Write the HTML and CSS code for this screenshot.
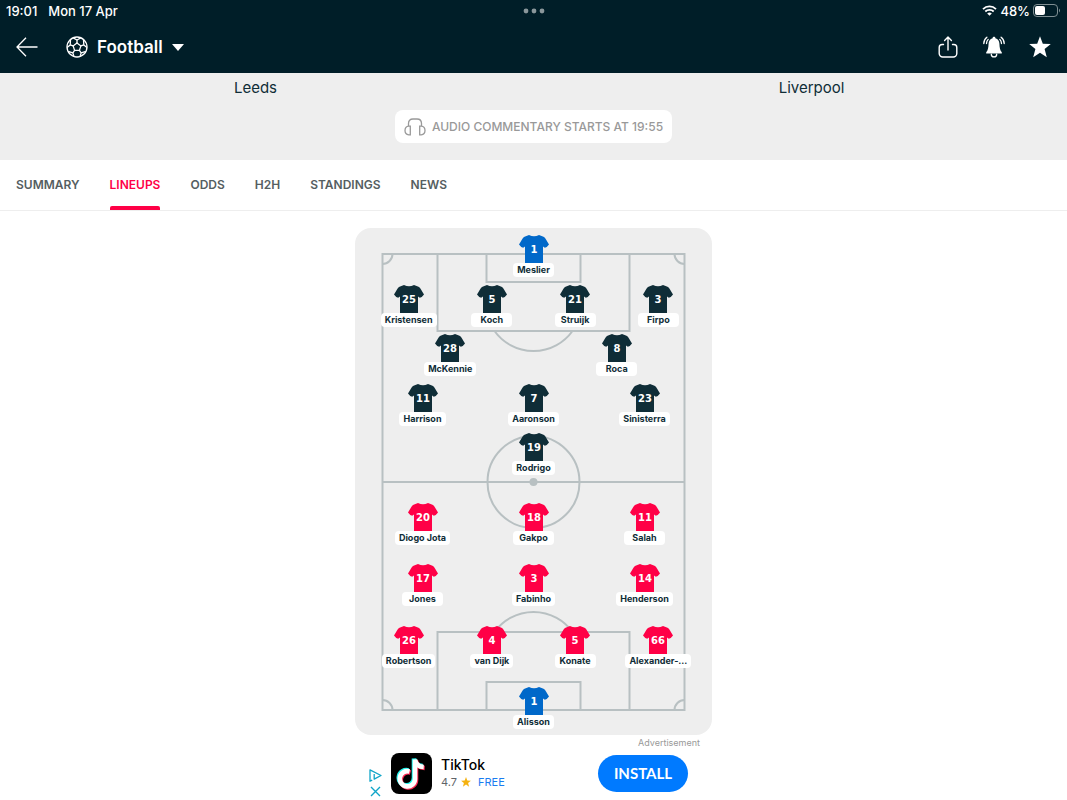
FILE: index.html
```html
<!DOCTYPE html>
<html lang="en">
<head>
    <meta charset="UTF-8">
    <meta name="viewport" content="width=device-width, initial-scale=1.0">
    <title>Leeds - Liverpool</title>
    <link rel="stylesheet" href="styles.css">
</head>
<body>
    <svg class="sprite" aria-hidden="true">
        <symbol id="shirt" viewBox="0 0 30 28">
            <path d="M10 0Q15 2.4 20 0L24.5 1.8Q26 2.6 27 4.4L30 9.6Q28.5 12 25.8 12.8L24 11.6V28H6V11.6L4.2 12.8Q1.5 12 0 9.6L3 4.4Q4 2.6 5.5 1.8Z"/>
        </symbol>
    </svg>

    <header class="header">
        <div class="status-bar">
            <div class="status-left">
                <span>19:01</span>
                <span>Mon 17 Apr</span>
            </div>
            <svg class="dots" width="22" height="6" viewBox="0 0 22 6">
                <circle cx="3" cy="3" r="2.4"/><circle cx="11" cy="3" r="2.4"/><circle cx="19" cy="3" r="2.4"/>
            </svg>
            <div class="status-right">
                <svg width="15" height="11" viewBox="0 0 15 11" fill="none" stroke="#fff" stroke-width="1.8">
                    <path d="M1 4.1a9.2 9.2 0 0 1 13 0M3.3 6.5a6 6 0 0 1 8.4 0"/>
                    <path d="M7.5 10.8L5.2 8.5a3.3 3.3 0 0 1 4.6 0z" fill="#fff" stroke="none"/>
                </svg>
                <span>48%</span>
                <svg width="28" height="13" viewBox="0 0 28 13">
                    <rect x=".5" y=".5" width="24" height="12" rx="3.5" fill="none" stroke="#7f8f93"/>
                    <rect x="2" y="2" width="10" height="9" rx="2" fill="#fff"/>
                    <path d="M26 4.5q2 2 0 4z" fill="#7f8f93"/>
                </svg>
            </div>
        </div>
        <div class="nav-bar">
            <button class="icon-button back" aria-label="Back">
                <svg width="22" height="20" viewBox="0 0 22 20" fill="none" stroke="#fff" stroke-width="1.3"><path d="M10 .8L1 10l9 9.2M1 10h20.5"/></svg>
            </button>
            <button class="sport" aria-haspopup="true">
                <svg width="22" height="22" viewBox="0 0 22 22" fill="none" stroke="#fff" stroke-width="1.3" stroke-linejoin="round">
                    <circle cx="11" cy="11" r="10"/>
                    <path d="M11 7l3.9 2.9-1.5 4.5H8.6L7.1 9.9z"/>
                    <path d="M11 7V4M14.9 9.9l2.9-1M13.4 14.4l1.8 2.5M8.6 14.4l-1.8 2.5M7.1 9.9l-2.9-1"/>
                    <path d="M7.2 1.9L11 4l3.8-2.1M17.5 3.7l.3 5.2L21 11.5M20 15.3l-4.8 1.6-1.3 3.7M8.1 20.6l-1.3-3.7L2 15.3M1 11.5l3.2-2.6.3-5.2"/>
                </svg>
                <span>Football</span>
                <svg width="12" height="7" viewBox="0 0 12 7" fill="#fff"><path d="M0 0h12L6 7z"/></svg>
            </button>
            <div class="actions">
                <button class="icon-button" aria-label="Share">
                    <svg width="20" height="22" viewBox="0 0 20 22" fill="none" stroke="#fff" stroke-width="1.4" stroke-linecap="round" stroke-linejoin="round">
                        <path d="M10 14V1.2M6.6 4.4L10 1l3.4 3.4M5.5 8.5H4.2A3 3 0 0 0 1.2 11.5V17.5a3.5 3.5 0 0 0 3.5 3.5h10.6a3.5 3.5 0 0 0 3.5-3.5V11.5a3 3 0 0 0-3-3H14.5"/>
                    </svg>
                </button>
                <button class="icon-button" aria-label="Notifications">
                    <svg width="22" height="22" viewBox="0 0 22 22" fill="none" stroke="#fff" stroke-width="1.3" stroke-linecap="round">
                        <path d="M11 .8c.9 0 1.4.6 1.4 1.4 2.6.7 3.9 2.8 4 5.4.2 4.5.6 6.9 2.4 8.7v1.2H3.2v-1.2c1.8-1.8 2.2-4.2 2.4-8.7.1-2.6 1.4-4.7 4-5.4 0-.8.5-1.4 1.4-1.4z" fill="#fff" stroke="none"/>
                        <path d="M8.3 18.2a2.7 2.7 0 0 0 5.4 0M3.500 7.500c0-1.800.6-3 1.700-4.100M.8 7.500C.8 4.700 1.800 2.700 3.900 1.200M18.500 7.500c0-1.800-.6-3-1.700-4.100M21.200 7.500c0-2.800-1-4.800-3.100-6.300"/>
                    </svg>
                </button>
                <button class="icon-button" aria-label="Favourite">
                    <svg width="22" height="22" viewBox="0 0 22 22" fill="#fff"><path d="M11 .2l2.800 7.600 8 .3-6.200 5 2.200 8.200L11 16.700 4.200 21.300l2.200-8.200-6.200-5 8-.3z"/></svg>
                </button>
            </div>
        </div>
    </header>

    <section class="match">
        <div class="teams">
            <span class="team">Leeds</span>
            <span class="team">Liverpool</span>
        </div>
        <button class="audio">
            <svg width="22" height="18" viewBox="0 0 22 18" fill="none" stroke="#999" stroke-width="1.3">
                <path d="M4.5 8V5.500Q4.500 1 9 1h4q4.500 0 4.500 4.500V8"/>
                <path d="M6.300 16.800V8.200H4.800Q1 8.600 1 12.500T4.800 16.800zM15.700 16.800V8.200h1.500q3.800.4 3.800 4.300t-3.800 4.300z"/>
            </svg>
            <span>AUDIO COMMENTARY STARTS AT 19:55</span>
        </button>
    </section>

    <nav class="tabs">
        <a href="#" class="tab">SUMMARY</a>
        <a href="#" class="tab active">LINEUPS</a>
        <a href="#" class="tab">ODDS</a>
        <a href="#" class="tab">H2H</a>
        <a href="#" class="tab">STANDINGS</a>
        <a href="#" class="tab">NEWS</a>
    </nav>

    <main class="content">
        <div class="pitch">
            <svg class="lines" viewBox="0 0 357 507" preserveAspectRatio="none">
                <rect x="27.5" y="26" width="302" height="456"/>
                <path d="M27.5 254h302"/>
                <circle cx="178.5" cy="254" r="46"/>
                <circle class="spot" cx="178.5" cy="254" r="4"/>
                <path d="M82.5 26v77h192V26M131.5 26v28h94V26M139.5 103a48 48 0 0 0 78 0"/>
                <path d="M82.5 482v-78h192v78M131.5 482v-28h94v28M139.5 404a48 48 0 0 1 78 0"/>
                <path d="M37.5 26a10 10 0 0 1-10 10M319.5 26a10 10 0 0 0 10 10M37.5 482a10 10 0 0 0-10-10M319.5 482a10 10 0 0 1 10-10"/>
            </svg>

            <div class="half home">
                <div class="row">
                    <div class="player keeper"><svg class="shirt"><use href="#shirt"/><text x="15" y="18">1</text></svg><span class="name">Meslier</span></div>
                </div>
                <div class="row">
                    <div class="player"><svg class="shirt"><use href="#shirt"/><text x="15" y="18">25</text></svg><span class="name">Kristensen</span></div>
                    <div class="player"><svg class="shirt"><use href="#shirt"/><text x="15" y="18">5</text></svg><span class="name">Koch</span></div>
                    <div class="player"><svg class="shirt"><use href="#shirt"/><text x="15" y="18">21</text></svg><span class="name">Struijk</span></div>
                    <div class="player"><svg class="shirt"><use href="#shirt"/><text x="15" y="18">3</text></svg><span class="name">Firpo</span></div>
                </div>
                <div class="row">
                    <div class="player"><svg class="shirt"><use href="#shirt"/><text x="15" y="18">28</text></svg><span class="name">McKennie</span></div>
                    <div class="player"><svg class="shirt"><use href="#shirt"/><text x="15" y="18">8</text></svg><span class="name">Roca</span></div>
                </div>
                <div class="row">
                    <div class="player"><svg class="shirt"><use href="#shirt"/><text x="15" y="18">11</text></svg><span class="name">Harrison</span></div>
                    <div class="player"><svg class="shirt"><use href="#shirt"/><text x="15" y="18">7</text></svg><span class="name">Aaronson</span></div>
                    <div class="player"><svg class="shirt"><use href="#shirt"/><text x="15" y="18">23</text></svg><span class="name">Sinisterra</span></div>
                </div>
                <div class="row">
                    <div class="player"><svg class="shirt"><use href="#shirt"/><text x="15" y="18">19</text></svg><span class="name">Rodrigo</span></div>
                </div>
            </div>

            <div class="half away">
                <div class="row">
                    <div class="player"><svg class="shirt"><use href="#shirt"/><text x="15" y="18">20</text></svg><span class="name">Diogo Jota</span></div>
                    <div class="player"><svg class="shirt"><use href="#shirt"/><text x="15" y="18">18</text></svg><span class="name">Gakpo</span></div>
                    <div class="player"><svg class="shirt"><use href="#shirt"/><text x="15" y="18">11</text></svg><span class="name">Salah</span></div>
                </div>
                <div class="row">
                    <div class="player"><svg class="shirt"><use href="#shirt"/><text x="15" y="18">17</text></svg><span class="name">Jones</span></div>
                    <div class="player"><svg class="shirt"><use href="#shirt"/><text x="15" y="18">3</text></svg><span class="name">Fabinho</span></div>
                    <div class="player"><svg class="shirt"><use href="#shirt"/><text x="15" y="18">14</text></svg><span class="name">Henderson</span></div>
                </div>
                <div class="row">
                    <div class="player"><svg class="shirt"><use href="#shirt"/><text x="15" y="18">26</text></svg><span class="name">Robertson</span></div>
                    <div class="player"><svg class="shirt"><use href="#shirt"/><text x="15" y="18">4</text></svg><span class="name">van Dijk</span></div>
                    <div class="player"><svg class="shirt"><use href="#shirt"/><text x="15" y="18">5</text></svg><span class="name">Konate</span></div>
                    <div class="player"><svg class="shirt"><use href="#shirt"/><text x="15" y="18">66</text></svg><span class="name">Alexander-...</span></div>
                </div>
                <div class="row">
                    <div class="player keeper"><svg class="shirt"><use href="#shirt"/><text x="15" y="18">1</text></svg><span class="name">Alisson</span></div>
                </div>
            </div>
        </div>

        <aside class="ad">
            <div class="ad-label">Advertisement</div>
            <div class="ad-body">
                <div class="ad-controls">
                    <svg width="13" height="13" viewBox="0 0 13 13" fill="none" stroke="#10a5c8" stroke-width="1.3" stroke-linejoin="round"><path d="M3.2 11.2L1 12.2V.8l11 5.700-6.800 3.600V5"/></svg>
                    <svg width="13" height="11" viewBox="0 0 13 11" fill="none" stroke="#10a5c8" stroke-width="1.4"><path d="M2 1l9 9M11 1l-9 9"/></svg>
                </div>
                <svg class="app-icon" width="41" height="41" viewBox="0 0 41 41">
                    <rect width="41" height="41" rx="8"/>
                    <g fill="none" stroke-width="4.6">
                        <path stroke="#25f4ee" d="M17.500 17.500a7.600 7.600 0 1 0 5.500 7.400V5.500c.5 4.200 3.500 7.200 8.700 7.500"/>
                        <path stroke="#fe2c55" d="M19.500 19.500a7.600 7.600 0 1 0 5.500 7.400V7.500c.5 4.200 3.500 7.200 8.700 7.500"/>
                        <path stroke="#fff" d="M18.500 18.500a7.600 7.600 0 1 0 5.500 7.400V6.500c.5 4.200 3.500 7.200 8.700 7.500"/>
                    </g>
                </svg>
                <div class="app">
                    <div class="app-name">TikTok</div>
                    <div class="app-meta">
                        <span>4.7</span>
                        <svg width="10" height="10" viewBox="0 0 22 22" fill="#f5b211"><path d="M11 .2l2.800 7.600 8 .3-6.200 5 2.200 8.200L11 16.700 4.200 21.300l2.200-8.200-6.200-5 8-.3z"/></svg>
                        <span class="free">FREE</span>
                    </div>
                </div>
                <button class="install">INSTALL</button>
            </div>
        </aside>
    </main>
</body>
</html>
```
FILE: styles.css
```css
* {
    box-sizing: border-box;
}

body {
    margin: 0;
    font-family: Inter, "Liberation Sans", Arial, sans-serif;
    color: #0f2d37;
    background: #fff;
}

svg {
    display: block;
    flex: none;
}

button {
    font-family: inherit;
    border: none;
    background: none;
    padding: 0;
    cursor: pointer;
}

.sprite {
    position: absolute;
    width: 0;
    height: 0;
}

.header {
    background: #001e28;
    color: #fff;
}

.status-bar {
    display: flex;
    align-items: center;
    justify-content: space-between;
    height: 21px;
    padding: 0 6px;
    font-size: 13px;
    font-weight: 500;
}

.status-left,
.status-right {
    display: flex;
    align-items: center;
    flex: 1;
    gap: 11px;
}

.status-right {
    justify-content: flex-end;
    gap: 3px;
}

.dots {
    fill: #8a979b;
}

.nav-bar {
    display: flex;
    align-items: center;
    height: 52px;
    padding: 0 16px;
}

.icon-button {
    display: flex;
    align-items: center;
    justify-content: center;
    width: 22px;
    height: 22px;
}

.sport {
    display: flex;
    align-items: center;
    gap: 9px;
    margin-left: 28px;
    color: #fff;
    font-size: 17px;
    font-weight: 600;
}

.actions {
    display: flex;
    gap: 24px;
    margin-left: auto;
}

.match {
    display: flex;
    flex-direction: column;
    align-items: center;
    padding-bottom: 17px;
    background: #eee;
}

.teams {
    display: flex;
    gap: 45px;
    width: 100%;
    line-height: 29px;
    font-size: 15px;
}

.team {
    flex: 1;
    text-align: center;
}

.audio {
    display: flex;
    align-items: center;
    gap: 6px;
    height: 33px;
    margin-top: 8px;
    padding: 0 9px;
    border-radius: 8px;
    background: #fff;
    color: #999;
    font-size: 12px;
    font-weight: 500;
}

.tabs {
    display: flex;
    gap: 30px;
    height: 51px;
    padding: 0 16px;
    border-bottom: 1px solid #eee;
}

.tab {
    position: relative;
    line-height: 50px;
    color: #555e61;
    font-size: 12px;
    font-weight: 600;
    text-decoration: none;
}

.tab.active {
    color: #ff0046;
}

.tab.active::after {
    content: "";
    position: absolute;
    left: 0;
    right: 0;
    bottom: 0;
    height: 4px;
    border-radius: 2px 2px 0 0;
    background: #ff0046;
}

.content {
    width: 100%;
    max-width: 357px;
    margin: 0 auto;
    padding-top: 17px;
}

.pitch {
    position: relative;
    display: flex;
    flex-direction: column;
    gap: 28px;
    padding: 7px 12px 6px;
    border-radius: 16px;
    background: #eee;
}

.lines {
    position: absolute;
    top: 0;
    left: 0;
    width: 100%;
    height: 100%;
    fill: none;
    stroke: #b8c0c2;
    stroke-width: 2;
}

.lines .spot {
    fill: #b8c0c2;
    stroke: none;
}

.half {
    position: relative;
    display: flex;
    flex-direction: column;
    justify-content: space-between;
}

.home {
    min-height: 240px;
    fill: #0f2d37;
}

.away {
    min-height: 226px;
    fill: #ff0046;
}

.keeper {
    fill: #0068c9;
}

.row {
    display: flex;
}

.player {
    display: flex;
    flex: 1 1 0;
    flex-direction: column;
    align-items: center;
    min-width: 0;
}

.shirt {
    width: 30px;
    height: 28px;
}

.shirt text {
    fill: #fff;
    font-family: "DejaVu Sans", sans-serif;
    font-size: 10px;
    font-weight: bold;
    text-anchor: middle;
}

.name {
    min-width: 41px;
    padding: 0 4px;
    border-radius: 4px;
    background: #fff;
    color: #0f2d37;
    font-size: 9px;
    font-weight: 700;
    line-height: 14px;
    text-align: center;
    white-space: nowrap;
}

.ad-label {
    padding: 2px 12px 0 0;
    color: #999;
    font-size: 9px;
    line-height: 12px;
    text-align: right;
}

.ad-body {
    display: flex;
    align-items: center;
    height: 48px;
    padding: 0 24px 0 14px;
}

.ad-controls {
    display: flex;
    flex-direction: column;
    align-self: flex-end;
    gap: 4px;
    margin-right: 9px;
}

.app {
    margin-left: 9px;
}

.app-name {
    color: #000;
    font-size: 14px;
    font-weight: 500;
    line-height: 18px;
}

.app-meta {
    display: flex;
    align-items: center;
    gap: 4px;
    color: #5f6368;
    font-size: 11px;
    line-height: 16px;
}

.free {
    margin-left: 3px;
    color: #1a7cf0;
}

.install {
    width: 90px;
    height: 37px;
    margin-left: auto;
    border-radius: 19px;
    background: #007aff;
    color: #fff;
    font-family: Lato, sans-serif;
    font-size: 15px;
    font-weight: 700;
}
```
